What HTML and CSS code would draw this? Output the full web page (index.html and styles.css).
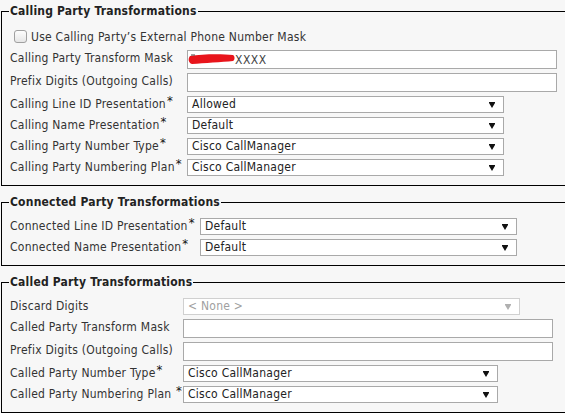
FILE: index.html
```html
<!DOCTYPE html>
<html lang="en">
<head>
<meta charset="utf-8">
<title>Party Transformations</title>
<link rel="stylesheet" href="styles.css">
</head>
<body>
<fieldset class="group group-calling">
  <legend>Calling Party Transformations</legend>
  <div class="check-row">
    <span class="checkbox"></span>
    <span>Use Calling Party’s External Phone Number Mask</span>
  </div>
  <div class="rows">
    <div class="label">Calling Party Transform Mask</div>
    <div class="input">
      <svg class="redact" width="47" height="11" viewBox="0 0 47 11"><path d="M2,2 C14,0 34,0 45,1 C47,2 47,6 45,7 C34,8 16,9 4,10 C0,9 0,4 2,2 Z" fill="#e8141b"/><path d="M3,1 L7,1" stroke="#444" stroke-width="1"/></svg>
      <span class="mask-text">XXXX</span>
    </div>
    <div class="label">Prefix Digits (Outgoing Calls)</div>
    <div class="input"></div>
    <div class="label">Calling Line ID Presentation<span class="req">*</span></div>
    <div class="select"><span>Allowed</span><svg class="caret" width="6" height="6" viewBox="0 0 6 6"><polygon points="0,0 6,0 6,1 3,6 0,1"/></svg></div>
    <div class="label">Calling Name Presentation<span class="req">*</span></div>
    <div class="select"><span>Default</span><svg class="caret" width="6" height="6" viewBox="0 0 6 6"><polygon points="0,0 6,0 6,1 3,6 0,1"/></svg></div>
    <div class="label">Calling Party Number Type<span class="req">*</span></div>
    <div class="select"><span>Cisco CallManager</span><svg class="caret" width="6" height="6" viewBox="0 0 6 6"><polygon points="0,0 6,0 6,1 3,6 0,1"/></svg></div>
    <div class="label">Calling Party Numbering Plan<span class="req">*</span></div>
    <div class="select"><span>Cisco CallManager</span><svg class="caret" width="6" height="6" viewBox="0 0 6 6"><polygon points="0,0 6,0 6,1 3,6 0,1"/></svg></div>
  </div>
</fieldset>

<fieldset class="group group-connected">
  <legend>Connected Party Transformations</legend>
  <div class="rows">
    <div class="label">Connected Line ID Presentation<span class="req">*</span></div>
    <div class="select"><span>Default</span><svg class="caret" width="6" height="6" viewBox="0 0 6 6"><polygon points="0,0 6,0 6,1 3,6 0,1"/></svg></div>
    <div class="label">Connected Name Presentation<span class="req">*</span></div>
    <div class="select"><span>Default</span><svg class="caret" width="6" height="6" viewBox="0 0 6 6"><polygon points="0,0 6,0 6,1 3,6 0,1"/></svg></div>
  </div>
</fieldset>

<fieldset class="group group-called">
  <legend>Called Party Transformations</legend>
  <div class="rows">
    <div class="label">Discard Digits</div>
    <div class="select select-disabled select-wide"><span>&lt; None &gt;</span><svg class="caret" width="6" height="6" viewBox="0 0 6 6"><polygon points="0,0 6,0 6,1 3,6 0,1"/></svg></div>
    <div class="label">Called Party Transform Mask</div>
    <div class="input"></div>
    <div class="label">Prefix Digits (Outgoing Calls)</div>
    <div class="input"></div>
    <div class="label">Called Party Number Type<span class="req">*</span></div>
    <div class="select"><span>Cisco CallManager</span><svg class="caret" width="6" height="6" viewBox="0 0 6 6"><polygon points="0,0 6,0 6,1 3,6 0,1"/></svg></div>
    <div class="label">Called Party Numbering Plan <span class="req">*</span></div>
    <div class="select"><span>Cisco CallManager</span><svg class="caret" width="6" height="6" viewBox="0 0 6 6"><polygon points="0,0 6,0 6,1 3,6 0,1"/></svg></div>
  </div>
</fieldset>
</body>
</html>
```

FILE: styles.css
```css
html, body {
  margin: 0;
  padding: 0;
}

body {
  background: #f7f7f7;
  font-family: "DejaVu Sans Condensed", "DejaVu Sans", sans-serif;
  font-size: 12px;
  line-height: 14px;
  letter-spacing: 0.25px;
  color: #333;
  overflow: hidden;
}

.group {
  margin: 9px 0 0 1px;
  padding: 6px 0 7px 7px;
  border: 1px solid #000;
  border-right: 0;
  min-width: 0;
}

.group-calling {
  margin-top: 4px;
}

.group legend {
  padding: 0 1px;
  font-weight: bold;
  line-height: 15px;
  letter-spacing: 0.2px;
  color: #222;
}

.check-row {
  display: flex;
  align-items: center;
  height: 23px;
  padding-left: 5px;
  gap: 4px;
}

.checkbox {
  width: 13px;
  height: 13px;
  box-sizing: border-box;
  border: 1px solid #a0a0a0;
  border-radius: 3px;
  background: linear-gradient(#fdfdfd, #e6e6e6);
}

.rows {
  display: grid;
  grid-template-columns: 177px auto;
  justify-items: start;
  padding-left: 1px;
}

.group-connected .rows {
  grid-template-columns: 190px auto;
}

.group-called .rows {
  grid-template-columns: 173px auto;
}

.label {
  padding-top: 3px;
  white-space: nowrap;
}

.req {
  font-size: 13px;
  line-height: 0;
  vertical-align: 3px;
  margin-left: 1px;
  color: #111;
}

.input {
  box-sizing: border-box;
  width: 370px;
  height: 19px;
  margin: 2px 0;
  border: 1px solid #a9a9a9;
  background: #fff;
  display: flex;
  align-items: center;
}

.redact {
  display: block;
  flex: none;
}

.mask-text {
  color: #444;
  letter-spacing: 0.5px;
}

.select {
  box-sizing: border-box;
  width: 317px;
  height: 17px;
  margin: 2px 0;
  padding: 0 8px 0 4px;
  border: 1px solid #a9a9a9;
  background: #fff;
  display: flex;
  align-items: center;
  justify-content: space-between;
  line-height: 15px;
  color: #222;
}

.group-called .select {
  width: 315px;
}

.group-called .select-wide {
  width: 337px;
}

.select-disabled {
  border-color: #d0d0d0;
  color: #a0a0a0;
}

.caret {
  display: block;
  fill: #111;
}

.select-disabled .caret {
  fill: #b0b0b0;
}
```
